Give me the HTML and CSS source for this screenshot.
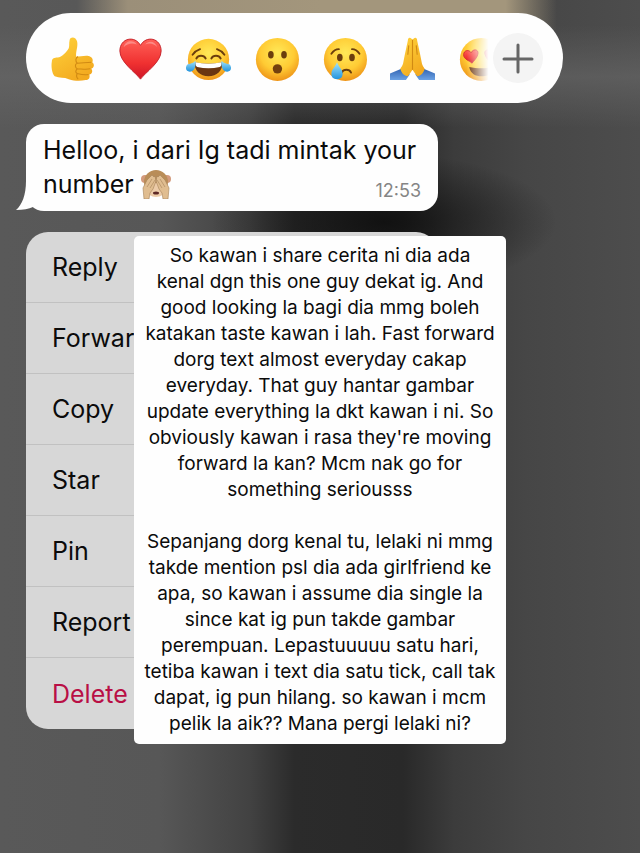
FILE: index.html
```
<!DOCTYPE html>
<html lang="ms">
<head>
<meta charset="UTF-8">
<meta name="viewport" content="width=device-width, initial-scale=1">
<title>Message menu</title>
<link rel="stylesheet" href="styles.css">
</head>

<body>

<!-- Shared gradients -->
<svg class="defs" aria-hidden="true">
    <defs>
        <radialGradient id="face" cx="0.5" cy="0.35" r="0.65">
            <stop offset="0" stop-color="#ffe958"/>
            <stop offset="0.6" stop-color="#ffcb34"/>
            <stop offset="1" stop-color="#ee9418"/>
        </radialGradient>
        <linearGradient id="skin" x1="0" y1="0" x2="0.6" y2="1">
            <stop offset="0" stop-color="#ffd33c"/>
            <stop offset="1" stop-color="#f3aa1f"/>
        </linearGradient>
        <linearGradient id="red" x1="0" y1="0" x2="0" y2="1">
            <stop offset="0" stop-color="#ff6057"/>
            <stop offset="0.6" stop-color="#f03131"/>
            <stop offset="1" stop-color="#ce1527"/>
        </linearGradient>
        <linearGradient id="tear" x1="0" y1="0" x2="0" y2="1">
            <stop offset="0" stop-color="#a4e4fb"/>
            <stop offset="1" stop-color="#2394dd"/>
        </linearGradient>
        <linearGradient id="sleeve" x1="0" y1="0" x2="0" y2="1">
            <stop offset="0" stop-color="#2d5fae"/>
            <stop offset="1" stop-color="#6ba2e4"/>
        </linearGradient>
    </defs>
</svg>

<main class="chat">

    <div class="reactions">
        <div class="emoji-strip">
            <button class="emoji" aria-label="Thumbs up">
                <svg viewBox="0 0 48 48">
                    <path fill="url(#skin)" d="M2 27c0-3 3-4 6-4 5-1 9-5 12-10 1-3 0-5 1-9 1-4 7-3 8 2 1 6-2 11-1 16 4 0 12-2 15 0 3 1 3 5 2 6 3 2 2 6-1 7 2 2 1 6-2 6 1 4-1 6-4 6-6 1-12 1-18-1-5-2-10-1-15-3-3-3-4-11-3-16z"/>
                    <path class="thumb-line" d="M44 28c-5 1-11 0-15 1M43 35c-5 1-10 0-14 0M41 41c-4 1-8 0-12-1M30 22c-3 1-3 5-1 7-3 1-2 5 0 6-2 2-2 4 0 5-1 2-1 4 1 6"/>
                </svg>
            </button>
            <button class="emoji" aria-label="Red heart">
                <svg viewBox="0 0 48 48">
                    <path fill="url(#red)" stroke="#c4222b" d="M24 46C19 39 2 28 2 16 2 2 18-1 24 10 30-1 46 2 46 16c0 12-17 23-22 30z"/>
                    <path fill="#fff" opacity=".3" d="M6 12C8 4 17 4 20 9 15 7 10 8 6 12zM29 9c4-5 11-3 13 3-4-4-8-5-13-3z"/>
                </svg>
            </button>
            <button class="emoji" aria-label="Tears of joy">
                <svg viewBox="0 0 48 48">
                    <circle cx="24" cy="25" r="22" fill="url(#face)"/>
                    <path class="brow" d="M7 20c2-3 5-5 8-6M33 14c3 1 6 3 8 6"/>
                    <path class="eye-line" d="M11 24c2-4 8-4 10 0M27 24c2-4 8-4 10 0"/>
                    <path fill="#6b3611" d="M9 28c10 2 20 2 30 0 0 9-6 15-15 15S9 37 9 28z"/>
                    <path fill="#fff" d="M10 28c9 2 19 2 28 0 0 3-1 5-2 5-8 2-16 2-24 0-1 0-2-2-2-5z"/>
                    <path fill="url(#tear)" d="M10 26c1 6-1 12-6 12-5 0-5-6-2-8 3-1 6-1 8-4zM38 26c-1 6 1 12 6 12 5 0 5-6 2-8-3-1-6-1-8-4z"/>
                </svg>
            </button>
            <button class="emoji" aria-label="Surprised">
                <svg viewBox="0 0 48 48">
                    <circle cx="25" cy="25" r="23" fill="url(#face)"/>
                    <ellipse cx="18" cy="20" rx="3" ry="4" fill="#6b3e0d"/>
                    <ellipse cx="32" cy="20" rx="3" ry="4" fill="#6b3e0d"/>
                    <ellipse cx="25" cy="35" rx="5" ry="5" fill="#73400e"/>
                </svg>
            </button>
            <button class="emoji" aria-label="Crying">
                <svg viewBox="0 0 48 48">
                    <circle cx="25" cy="25" r="23" fill="url(#face)"/>
                    <path class="brow" d="M10 19c2-3 5-5 8-5M32 14c3 0 6 2 8 5"/>
                    <ellipse cx="19" cy="23" rx="3" ry="4" fill="#6b3e0d"/>
                    <ellipse cx="32" cy="23" rx="3" ry="4" fill="#6b3e0d"/>
                    <path class="brow" d="M21 39c2-4 8-4 10 0"/>
                    <path fill="url(#tear)" d="M16 28c2 5 6 8 6 12s-2 6-6 6-6-2-6-6 4-7 6-12z"/>
                </svg>
            </button>
            <button class="emoji" aria-label="Folded hands">
                <svg viewBox="0 0 48 48">
                    <path fill="url(#sleeve)" d="M0 40l14-6 7 7-4 6H0zM48 40l-14-6-7 7 4 6h17z"/>
                    <path fill="url(#skin)" d="M23 3c-2-2-4-1-4 2l-3 14-2 10c-1 4-3 5-3 6 1 4 4 8 8 8l3-4 2-3 2 3 3 4c4 0 7-4 8-8 0-1-2-2-3-6l-2-10-3-14c0-3-2-4-4-2l-1 1z"/>
                    <path class="thumb-line" d="M24 4v32M20 10l-1 10M28 10l1 10"/>
                </svg>
            </button>
            <button class="emoji" aria-label="Heart eyes">
                <svg viewBox="0 0 48 48">
                    <circle cx="25" cy="25" r="23" fill="url(#face)"/>
                    <path fill="url(#red)" stroke="#d12c2c" d="M15 29c-3-3-9-4-9-9 0-5 6-6 8-2 2-5 9-4 7 2-1 4-4 6-6 9zM35 29c3-3 9-4 9-9 0-5-6-6-8-2-2-5-9-4-7 2 1 4 4 6 6 9z"/>
                    <path fill="#6b3611" d="M12 33c8 2 18 2 26 0-1 8-7 10-13 10s-12-3-13-10z"/>
                </svg>
            </button>
        </div>
        <button class="more" aria-label="More reactions">
            <svg viewBox="0 0 50 50"><path d="M25 12v27M11 26h28"/></svg>
        </button>
    </div>

    <div class="message">
        <svg class="tail" viewBox="0 0 24 30" aria-hidden="true"><path d="M10 0C10 14 6 24 0 29c7 0 13-1 17-3l7-12z"/></svg>
        <p>Helloo, i dari Ig tadi mintak your number
            <svg class="monkey" viewBox="0 0 30 30" role="img" aria-label="See no evil monkey">
                <circle cx="4" cy="10" r="4" fill="#d39a7c"/>
                <circle cx="26" cy="10" r="4" fill="#d39a7c"/>
                <circle cx="15" cy="13" r="12" fill="#b98d58"/>
                <ellipse cx="15" cy="21" rx="9" ry="7" fill="#eccba8"/>
                <path fill="#e0bd90" stroke="#a58259" stroke-width=".6" d="M3 30l-1-11 4-8 5-5 2 2 1-1 1 5-3 8-3 4-1 6zM27 30l1-11-4-8-5-5-2 2-1-1-1 5 3 8 3 4 1 6z"/>
                <path fill="none" stroke="#a58259" stroke-width=".6" d="M6 18l5-8M9 19l5-8M24 18l-5-8M21 19l-5-8"/>
                <ellipse cx="15" cy="24" rx="3" ry="1.5" fill="#5d2927"/>
            </svg>
            <time>12:53</time>
        </p>
    </div>

    <div class="menu-area">
        <div class="menu">
            <button>Reply</button>
            <button>Forward</button>
            <button>Copy</button>
            <button>Star</button>
            <button>Pin</button>
            <button>Report</button>
            <button class="delete">Delete</button>
        </div>

        <div class="note">
            <p>So kawan i share cerita ni dia ada<br>
            kenal dgn this one guy dekat ig. And<br>
            good looking la bagi dia mmg boleh<br>
            katakan taste kawan i lah. Fast forward<br>
            dorg text almost everyday cakap<br>
            everyday. That guy hantar gambar<br>
            update everything la dkt kawan i ni. So<br>
            obviously kawan i rasa they're moving<br>
            forward la kan? Mcm nak go for<br>
            something seriousss</p>
            <p>Sepanjang dorg kenal tu, lelaki ni mmg<br>
            takde mention psl dia ada girlfriend ke<br>
            apa, so kawan i assume dia single la<br>
            since kat ig pun takde gambar<br>
            perempuan. Lepastuuuuu satu hari,<br>
            tetiba kawan i text dia satu tick, call tak<br>
            dapat, ig pun hilang. so kawan i mcm<br>
            pelik la aik?? Mana pergi lelaki ni?</p>
        </div>
    </div>

</main>

</body>
</html>
```
FILE: styles.css
```
* { box-sizing: border-box; }

/* Dimmed chat wallpaper */
body {
    margin: 0;
    min-height: 100vh;
    font-family: Inter, 'Liberation Sans', sans-serif;
    color: #0b0b0b;
    background:
        linear-gradient(to right, rgba(163, 150, 124, 0) 12%, #9b8f79 20%, #a3967c 50%, #a3967c 79%, rgba(163, 150, 124, 0) 87%) 0 0 / 100% 30px no-repeat,
        linear-gradient(to bottom, rgba(100, 100, 100, 0) 3%, rgba(104, 104, 104, 0.6) 9%, rgba(80, 80, 80, 0) 15%),
        radial-gradient(ellipse 27% 8% at 60% 26%, rgba(15, 15, 15, 0.9) 0, rgba(25, 25, 25, 0) 100%),
        linear-gradient(to right, #595959 0, #575757 25%, #424242 39%, #2b2b2b 46%, #292929 63%, #3c3c3c 71%, #464646 82%, #4d4d4d 100%);
}

.defs { position: absolute; width: 0; height: 0; }

button {
    border: none;
    padding: 0;
    background: none;
    font-family: inherit;
    color: inherit;
    cursor: pointer;
}

.chat {
    display: flex;
    flex-direction: column;
    align-items: flex-start;
    gap: 21px;
    padding: 13px 26px;
}

/* Reactions */
.reactions {
    display: flex;
    align-items: center;
    width: 100%;
    max-width: 537px;
    padding: 20px 20px 20px 24px;
    border-radius: 45px;
    background: #fefefe;
}

.emoji-strip {
    flex: 1;
    min-width: 0;
    display: flex;
    gap: 24px;
    overflow: hidden;
    -webkit-mask-image: linear-gradient(to right, #000 94%, transparent 99%);
    mask-image: linear-gradient(to right, #000 94%, transparent 99%);
}

.emoji { flex: none; width: 45px; height: 45px; margin-right: -1px; }
.emoji svg, .more svg { display: block; width: 100%; }

.thumb-line { fill: none; stroke: #d18a13; stroke-width: 1.2; }
.brow, .eye-line { fill: none; stroke: #6b3e0d; stroke-width: 2; stroke-linecap: round; }

.more {
    flex: none;
    width: 50px;
    height: 50px;
    border-radius: 50%;
    background: #f4f4f4;
}
.more path { fill: none; stroke: #666; stroke-width: 3; stroke-linecap: round; }

/* Message bubble */
.message {
    position: relative;
    width: 100%;
    max-width: 412px;
    padding: 9px 17px 10px;
    border-radius: 18px;
    background: #fefefe;
}
.message p { margin: 0; font-size: 25px; line-height: 34px; }
.message time {
    float: right;
    margin-top: 13px;
    font-size: 18px;
    line-height: 21px;
    color: #858585;
}
.monkey { width: 30px; height: 30px; vertical-align: -6px; }
.tail { position: absolute; left: -10px; bottom: 0; width: 24px; height: 30px; fill: #fefefe; }

/* Context menu */
.menu-area { position: relative; width: 100%; }

.menu {
    display: flex;
    flex-direction: column;
    max-width: 412px;
    border-radius: 22px;
    background: #d7d7d7;
    overflow: hidden;
}
.menu button {
    height: 71px;
    padding: 0 26px;
    border-bottom: 1px solid #c1c1c1;
    text-align: left;
    font-size: 25px;
}
.menu .delete { border-bottom: none; color: #b90f45; }

/* Text card laid over the menu */
.note {
    position: absolute;
    top: 4px;
    left: 108px;
    width: 372px;
    padding: 7px 0;
    border-radius: 5px;
    background: #fefefe;
    text-align: center;
    font-size: 19px;
    line-height: 26px;
    white-space: nowrap;
}
.note p { margin: 0; }
.note p + p { margin-top: 26px; }
```
